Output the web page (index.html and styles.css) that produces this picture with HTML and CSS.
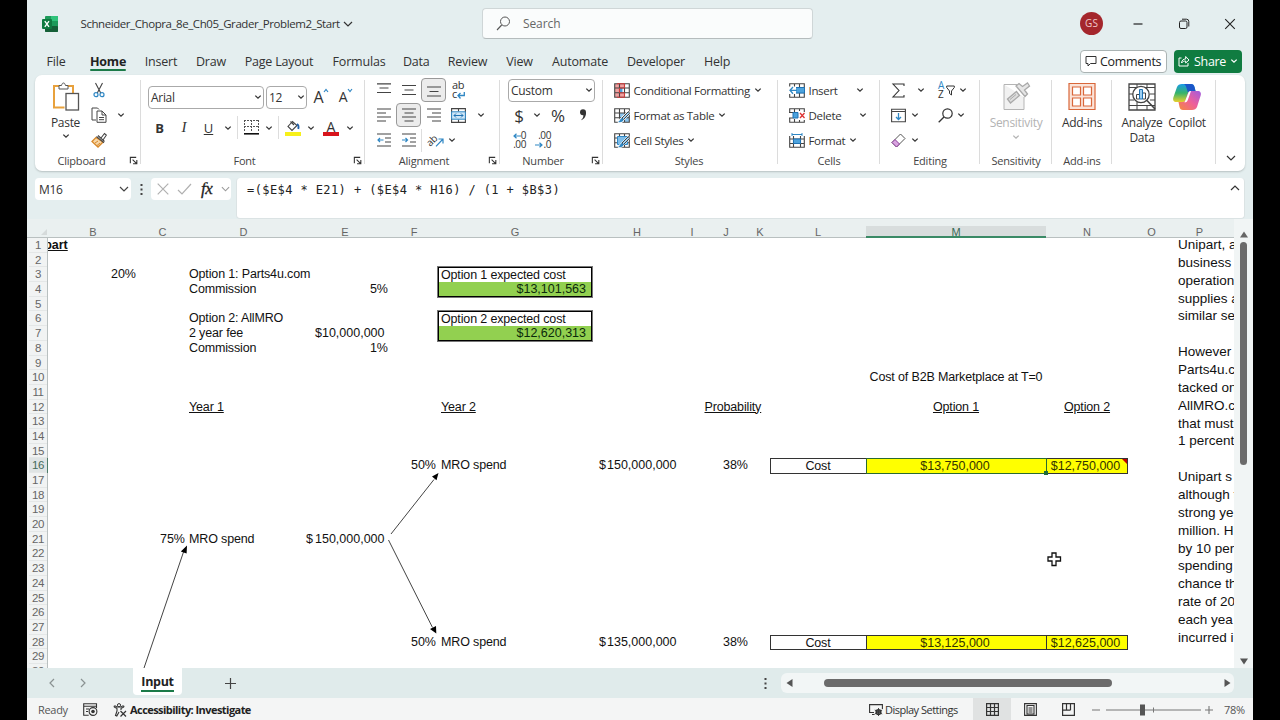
FILE: index.html
```html
<!DOCTYPE html>
<html lang="en">
<head>
    <meta charset="utf-8">
    <title>Schneider_Chopra_8e_Ch05_Grader_Problem2_Start - Excel</title>
    <link rel="stylesheet" href="styles.css">
</head>
<body>

<!-- shared icons -->
<svg class="defs" width="0" height="0">
    <symbol id="chev" viewBox="0 0 8 8"><path d="M1.3 2.6 4 5.2 6.7 2.6" fill="none" stroke="currentColor" stroke-width="1.3"/></symbol>
    <symbol id="launch" viewBox="0 0 10 10"><path d="M1.5 8V1.5H8M4 4l4.5 4.5M8.7 4.5v4.2H4.5" fill="none" stroke="#333" stroke-width="1.2"/></symbol>
    <symbol id="gridbox" viewBox="0 0 16 15"><path d="M.7.7h14.6v13.6H.7zM5.5.7v13.6M10.5.7v13.6M.7 5h14.6M.7 9.8h14.6" fill="none" stroke="#444" stroke-width="1.1"/></symbol>
</svg>

<div class="app">

    <!-- title bar -->
    <div class="title-bar">
        <svg class="logo" viewBox="0 0 16 16"><rect x="3" y="0" width="13" height="16" rx="1" fill="#1d9a5a"/><rect x="9" y="0" width="7" height="5" fill="#2fc27a"/><rect x="3" y="10" width="13" height="6" rx="1" fill="#155f37"/><rect x="0" y="3" width="10" height="10" rx="1" fill="#0f7a40"/><path d="M2.8 5.2l4.2 5.6M7 5.2l-4.2 5.6" stroke="#fff" stroke-width="1.4"/></svg>
        <span class="file-name">Schneider_Chopra_8e_Ch05_Grader_Problem2_Start</span>
        <svg class="name-chev" viewBox="0 0 10 8"><path d="M1 2l4 4 4-4" fill="none" stroke="#333" stroke-width="1.2"/></svg>
        <div class="search">
            <svg width="15" height="15" viewBox="0 0 15 15"><circle cx="9" cy="5.5" r="4.5" fill="none" stroke="#555"/><path d="M5.7 9 1 14" stroke="#555" stroke-width="1.1"/></svg>
            <span>Search</span>
        </div>
        <span class="avatar">GS</span>
        <svg class="win" viewBox="0 0 12 12"><path d="M1.5 6h9" stroke="#222" stroke-width="1.2"/></svg>
        <svg class="win" viewBox="0 0 12 12"><rect x="1.5" y="3" width="7.5" height="7.5" rx="1.5" fill="none" stroke="#222"/><path d="M4 1.2h4.500a2.300 2.300 0 0 1 2.300 2.300V8.500" fill="none" stroke="#222"/></svg>
        <svg class="win" viewBox="0 0 12 12"><path d="M1.200 1.200l9.600 9.600M10.800 1.200l-9.600 9.600" stroke="#222" stroke-width="1.100"/></svg>
    </div>

    <!-- ribbon tabs -->
    <div class="tabs">
        <span class="tab t-file">File</span>
        <span class="tab t-home active">Home</span>
        <span class="tab t-insert">Insert</span>
        <span class="tab t-draw">Draw</span>
        <span class="tab t-page">Page Layout</span>
        <span class="tab t-formulas">Formulas</span>
        <span class="tab t-data">Data</span>
        <span class="tab t-review">Review</span>
        <span class="tab t-view">View</span>
        <span class="tab t-auto">Automate</span>
        <span class="tab t-dev">Developer</span>
        <span class="tab t-help">Help</span>
        <button class="btn comments"><svg width="12" height="12" viewBox="0 0 12 12"><path d="M1 1.500h10v7H5.500L3 11V8.500H1z" fill="none" stroke="#333"/></svg>Comments</button>
        <button class="btn share"><svg width="12" height="12" viewBox="0 0 12 12"><path d="M3.500 3H1v8h9V8M3.500 8c.3-3 2-4 4.200-4V1.500L11 5 7.700 8V6C6 6 4.700 6.500 3.500 8z" fill="none" stroke="#fff"/></svg>Share<svg class="chev"><use href="#chev"/></svg></button>
    </div>

    <!-- ribbon -->
    <div class="ribbon">

        <div class="group g-clipboard">
            <div class="body">
                <div class="big">
                    <svg width="28" height="29" viewBox="0 0 28 29"><path d="M2 4.500h18V11h-7v14.500H2z" fill="#fff"/><path d="M12.500 25.600H2V4h5M15.500 4H21v7" fill="none" stroke="#e8a13c" stroke-width="2"/><path d="M7 7V3.500h2.500C10 1.800 10.500 1 11.500 1S13 1.800 13.500 3.500H16V7z" fill="#fff" stroke="#555"/><rect x="14" y="11.500" width="12.500" height="16.500" fill="#fff" stroke="#555" stroke-width="1.300"/></svg>
                    <span>Paste</span>
                    <svg class="chev"><use href="#chev"/></svg>
                </div>
                <div class="col">
                    <div class="row"><svg width="12" height="16" viewBox="0 0 12 16"><path d="M2.500 1l5.200 10M9.500 1 4.300 11" stroke="#444" stroke-width="1.100"/><circle cx="3" cy="12.700" r="2" fill="none" stroke="#2f87c4" stroke-width="1.200"/><circle cx="9" cy="12.700" r="2" fill="none" stroke="#2f87c4" stroke-width="1.200"/></svg></div>
                    <div class="row"><svg width="16" height="16" viewBox="0 0 16 16"><path d="M5 13H1V1h5.500l1.500 1.500M6 4h5l4 4v7.300H6zM11 4v4h4M8 10.500h5M8 12.700h5" fill="none" stroke="#444"/></svg><svg class="chev after"><use href="#chev"/></svg></div>
                    <div class="row"><svg width="16" height="16" viewBox="0 0 16 16"><path d="M5 5.500 1 9.500l6 5.500 5-5z" fill="#f7d7a8" stroke="#d8892b" stroke-width="1.300"/><path d="M4 11l3-2M6 13.500l3-2.500" stroke="#d8892b"/><path d="M5.500 4.500l7.500 6.300M7 3.500l6.500 6M10 6l3.500-4.500 1.800 1.700L12 8" fill="#fff" stroke="#444" stroke-width="1.100"/></svg></div>
                </div>
            </div>
            <div class="label">Clipboard</div><svg class="launch"><use href="#launch"/></svg>
        </div>

        <div class="group g-font">
            <div class="body">
                <div class="row top">
                    <div class="select font-name">Arial<svg class="chev"><use href="#chev"/></svg></div>
                    <div class="select font-size">12<svg class="chev"><use href="#chev"/></svg></div>
                    <span class="grow big-a">A<svg width="6" height="5" viewBox="0 0 6 5"><path d="M1 4l2-2.500L5 4" fill="none" stroke="#2f87c4" stroke-width="1.200"/></svg></span>
                    <span class="grow small-a">A<svg width="6" height="5" viewBox="0 0 6 5"><path d="M1 1l2 2.500L5 1" fill="none" stroke="#2f87c4" stroke-width="1.200"/></svg></span>
                </div>
                <div class="row bottom">
                    <b class="w25">B</b>
                    <i class="w24 serif">I</i>
                    <u class="w25">U</u>
                    <svg class="chev w14"><use href="#chev"/></svg>
                    <span class="sep"></span>
                    <span class="w22"><svg width="15" height="15" viewBox="0 0 15 15"><path d="M.5 0v12M7.500 0v12M14.500 0v12M0 .5h15M0 6.500h15" stroke="#555" stroke-dasharray="2 1"/><path d="M0 13.800h15" stroke="#111" stroke-width="1.600"/></svg></span>
                    <svg class="chev w14"><use href="#chev"/></svg>
                    <span class="sep"></span>
                    <span class="w24"><svg width="16" height="16" viewBox="0 0 16 16"><path d="M7.500 1.500 3 6.500l4 4 5-5zM5.500 1.500 9 5" fill="none" stroke="#444" stroke-width="1.100"/><path d="M12 4c1.700 1 1.800 3 1.300 5" fill="none" stroke="#1f5fa8" stroke-width="1.800"/><rect y="12" width="16" height="4" fill="#f7f01a"/></svg></span>
                    <svg class="chev w12"><use href="#chev"/></svg>
                    <span class="w28 font-color">A</span>
                    <svg class="chev w10"><use href="#chev"/></svg>
                </div>
            </div>
            <div class="label">Font</div><svg class="launch"><use href="#launch"/></svg>
        </div>

        <div class="group g-align">
            <div class="body">
                <div class="row">
                    <span class="w25"><svg width="14" height="14" viewBox="0 0 14 14"><path d="M0 .8h14M2.500 5h9M0 9.500h14" stroke="#444" stroke-width="1.200"/></svg></span>
                    <span class="w25"><svg width="14" height="14" viewBox="0 0 14 14"><path d="M0 2.500h14M2.500 7h9M0 11.500h14" stroke="#444" stroke-width="1.200"/></svg></span>
                    <span class="w25 pressed"><svg width="14" height="14" viewBox="0 0 14 14"><path d="M0 4h14M2.500 8.500h9M0 13h14" stroke="#444" stroke-width="1.200"/></svg></span>
                    <span class="w25 wrap-text">ab<br>c<svg width="8" height="8" viewBox="0 0 8 8"><path d="M7.300 0v3.500H1M3.500 1 1 3.500 3.500 6.500" fill="none" stroke="#2f87c4" stroke-width="1.300"/></svg></span>
                </div>
                <div class="row">
                    <span class="w25"><svg width="14" height="14" viewBox="0 0 14 14"><path d="M0 1h14M0 5h9M0 9h14M0 13h9" stroke="#444" stroke-width="1.200"/></svg></span>
                    <span class="w25 pressed"><svg width="14" height="14" viewBox="0 0 14 14"><path d="M0 1h14M2.500 5h9M0 9h14M2.500 13h9" stroke="#444" stroke-width="1.200"/></svg></span>
                    <span class="w25"><svg width="14" height="14" viewBox="0 0 14 14"><path d="M0 1h14M5 5h9M0 9h14M5 13h9" stroke="#444" stroke-width="1.200"/></svg></span>
                    <span class="w25"><svg width="15" height="15" viewBox="0 0 15 15"><path d="M.6.6h13.800v13.800H.6zM7.500.6v3M7.500 11.500v3" fill="none" stroke="#444" stroke-width="1.100"/><path d="M.6 3.800h13.800v7.400H.6z" fill="#cfe6f7" stroke="#2f87c4"/><path d="M3 7.500h9M5 5.500l-2 2 2 2M10 5.500l2 2-2 2" fill="none" stroke="#2073b4"/></svg></span>
                    <svg class="chev w20"><use href="#chev"/></svg>
                </div>
                <div class="row">
                    <span class="w25"><svg width="14" height="14" viewBox="0 0 14 14"><path d="M0 1h14M8 5h6M8 9h6M0 13h14" stroke="#444" stroke-width="1.200"/><path d="M6.500 7H1M3 5 1 7l2 2" fill="none" stroke="#2f87c4" stroke-width="1.200"/></svg></span>
                    <span class="w25"><svg width="14" height="14" viewBox="0 0 14 14"><path d="M0 1h14M8 5h6M8 9h6M0 13h14" stroke="#444" stroke-width="1.200"/><path d="M0 7h5.500M3.500 5l2 2-2 2" fill="none" stroke="#2f87c4" stroke-width="1.200"/></svg></span>
                    <span class="sep tightsep"></span>
                    <span class="w24 orient"><em>ab</em><svg width="9" height="9" viewBox="0 0 9 9"><path d="M1 8.300 8 1M3.500 1H8v4.500" fill="none" stroke="#2f87c4" stroke-width="1.200"/></svg></span>
                    <svg class="chev w10"><use href="#chev"/></svg>
                </div>
            </div>
            <div class="label">Alignment</div><svg class="launch"><use href="#launch"/></svg>
        </div>

        <div class="group g-number">
            <div class="body">
                <div class="row"><div class="select number-format">Custom<svg class="chev"><use href="#chev"/></svg></div></div>
                <div class="row sym">
                    <span class="w22">$</span><svg class="chev w14"><use href="#chev"/></svg><span class="w28">%</span><span class="w22 comma"><svg width="8" height="12" viewBox="0 0 8 12"><circle cx="4" cy="3.300" r="3" fill="#333"/><path d="M7 3C7.300 7 5.500 10 2 11.300c1.500-1.500 2.500-3 2.300-5z" fill="#333"/></svg></span>
                </div>
                <div class="row">
                    <span class="dec"><svg width="8" height="6" viewBox="0 0 8 6"><path d="M8 3H1M3.500.7 1 3l2.500 2.300" fill="none" stroke="#2f87c4" stroke-width="1.200"/></svg>0<br>.00</span>
                    <span class="dec">.00<br><svg width="8" height="6" viewBox="0 0 8 6"><path d="M0 3h7M4.500.7 7 3 4.500 5.300" fill="none" stroke="#2f87c4" stroke-width="1.200"/></svg>.0</span>
                </div>
            </div>
            <div class="label">Number</div><svg class="launch"><use href="#launch"/></svg>
        </div>

        <div class="group g-styles">
            <div class="body">
                <div class="row cmd"><svg width="16" height="15" viewBox="0 0 16 15"><path d="M1 1h9.500v4H5.500v4.500h5V14H1z" fill="#f3a0a0"/><path d="M5.500 5h3v5h-3z" fill="#4da3dd"/><use href="#gridbox"/><path d="M3 .7h7.500V5H5.500v4.800h5v4.500H3" fill="none" stroke="#cf3b3b"/></svg><span>Conditional Formatting</span><svg class="chev"><use href="#chev"/></svg></div>
                <div class="row cmd"><svg width="16" height="15" viewBox="0 0 16 15"><path d="M5.500 5H15v9H5.500z" fill="#8cc5ee"/><use href="#gridbox"/><path d="M14.500 3.500 7.500 10.500c-2 .5-1.500 3-3.500 3.500 3 .7 5-.5 5.200-2.200l6.300-6.500z" fill="#fff" stroke="#fff" stroke-width="2"/><path d="M14.500 3.500 8 10l1.500 1.500 6-6z" fill="#9fd0f2" stroke="#444"/><path d="M8 10c-2 0-1.500 3-4 4 3 .7 5.500-.5 5.500-2.500z" fill="#2f87c4"/></svg><span>Format as Table</span><svg class="chev"><use href="#chev"/></svg></div>
                <div class="row cmd"><svg width="16" height="15" viewBox="0 0 16 15"><use href="#gridbox"/><path d="M3.500 3.500h10v8h-10z" fill="#7dbdea" stroke="#2f87c4"/><path d="M14.500 3.500 7.500 10.500c-2 .5-1.500 3-3.500 3.500 3 .7 5-.5 5.200-2.200l6.300-6.500z" fill="#fff" stroke="#fff" stroke-width="1.500"/><path d="M14.500 3.500 8 10l1.500 1.500 6-6z" fill="#9fd0f2" stroke="#444"/><path d="M8 10c-2 0-1.500 3-4 4 3 .7 5.500-.5 5.500-2.500z" fill="#2f87c4"/></svg><span>Cell Styles</span><svg class="chev"><use href="#chev"/></svg></div>
            </div>
            <div class="label">Styles</div>
        </div>

        <div class="group g-cells">
            <div class="body">
                <div class="row cmd"><svg width="16" height="15" viewBox="0 0 16 15"><use href="#gridbox"/><path d="M6 4.500h9.500v5.500H6z" fill="#4da3dd" stroke="#2073b4"/><path d="M0 3.500h7v7.500H0z" fill="#fff"/><path d="M8 7.300H1M4 4 1 7.300l3 3.400" fill="none" stroke="#2f87c4" stroke-width="1.300"/></svg><span class="c-name ins">Insert</span><svg class="chev"><use href="#chev"/></svg></div>
                <div class="row cmd"><svg width="16" height="15" viewBox="0 0 16 15"><path d="M.7 5V.7h14.600V4M.7 10v4.300h14.600V12M5.500.7V4M10.500.7V3M5.500 11v3M10.500 12v2" fill="none" stroke="#444" stroke-width="1.100"/><path d="M0 4.500h4.500M0 10h4.500" stroke="#444"/><path d="M4 4.500h5v5.500H4z" fill="#4da3dd" stroke="#2073b4"/><path d="M11 5l4.500 5M15.500 5 11 10" stroke="#d33" stroke-width="1.300"/></svg><span class="c-name del">Delete</span><svg class="chev"><use href="#chev"/></svg></div>
                <div class="row cmd"><svg width="16" height="15" viewBox="0 0 16 15"><path d="M.7 3v11.300h14.600V3M4.500 3v11M11.500 3v11M.7 6h14.600M.7 10.500h14.600" fill="none" stroke="#444" stroke-width="1.100"/><path d="M4.500 6h7v4.500h-7z" fill="#4da3dd" stroke="#2073b4"/><path d="M3 1.500h10M3 0v3M13 0v3" stroke="#2f87c4"/></svg><span>Format</span><svg class="chev"><use href="#chev"/></svg></div>
            </div>
            <div class="label">Cells</div>
        </div>

        <div class="group g-editing">
            <div class="body">
                <div class="col e-left">
                    <div class="row"><svg width="15" height="15" viewBox="0 0 15 15"><path d="M13 3V1H2l6 6.500L2 14h11v-2" fill="none" stroke="#333" stroke-width="1.100"/></svg><svg class="chev far"><use href="#chev"/></svg></div>
                    <div class="row"><svg width="15" height="15" viewBox="0 0 15 15"><path d="M.6 1.200h13.800v12.600H.6zM.6 3.500h13.800" fill="none" stroke="#444" stroke-width="1.100"/><path d="M7.500 5v6.500M5 9l2.500 2.500L10 9" fill="none" stroke="#2f87c4" stroke-width="1.300"/></svg><svg class="chev"><use href="#chev"/></svg></div>
                    <div class="row"><svg width="15" height="15" viewBox="0 0 15 15"><path d="M1 9.500 9.500 1 14 5.500 5.500 14z" fill="#fff" stroke="#555"/><path d="M1 9.500 4 6.500 8.500 11l-3 3z" fill="#d9a3e0" stroke="#8a3f9a"/></svg><svg class="chev"><use href="#chev"/></svg></div>
                </div>
                <div class="col e-right">
                    <div class="row"><span class="az"><em>A</em><br>Z</span><svg width="9" height="11" viewBox="0 0 9 11"><path d="M.7 1h7.600v1.500L5.500 6v4L3.500 8.500V6L.7 2.500z" fill="none" stroke="#333"/></svg><svg class="chev"><use href="#chev"/></svg></div>
                    <div class="row"><svg width="15" height="15" viewBox="0 0 15 15"><circle cx="9.500" cy="5.500" r="4.700" fill="none" stroke="#333" stroke-width="1.200"/><path d="M6 9 .7 14.300" stroke="#333" stroke-width="1.300"/></svg><svg class="chev"><use href="#chev"/></svg></div>
                </div>
            </div>
            <div class="label">Editing</div>
        </div>

        <div class="group g-sens">
            <div class="body">
                <div class="big off">
                    <svg width="28" height="29" viewBox="0 0 28 29"><path d="M2 2.500h13M22 15v12.500H2v-25" fill="#f1f1f1" stroke="#b5b5b5"/><path d="M5.500 17l9-7.500 3 4L8.500 21z" fill="#ddd" stroke="#a9a9a9" stroke-width="1.300"/><path d="M8 17.500l6-5" stroke="#a9a9a9"/><path d="M14 4l9 10.500 2.500-2.500-3-4 5-4L25.500 1l-5 3.500L17 1.500z" fill="#e6e6e6" stroke="#a9a9a9" stroke-width="1.300"/></svg>
                    <span>Sensitivity</span>
                    <svg class="chev"><use href="#chev"/></svg>
                </div>
            </div>
            <div class="label">Sensitivity</div>
        </div>

        <div class="group g-addins">
            <div class="body">
                <div class="big">
                    <svg width="28" height="29" viewBox="0 0 28 29"><path d="M1 1.500h26v26H1z" fill="#fbe3d8" stroke="#d9673a" stroke-width="1.200"/><path d="M4.500 5h8v8h-8zM15.500 5h8v8h-8zM4.500 16h8v8h-8zM15.500 16h8v8h-8z" fill="#fff" stroke="#d9673a" stroke-width="1.200"/></svg>
                    <span>Add-ins</span>
                </div>
            </div>
            <div class="label">Add-ins</div>
        </div>

        <div class="group g-analyze">
            <div class="body">
                <div class="big">
                    <svg width="28" height="29" viewBox="0 0 28 29"><path d="M1 2h26v26H1z" fill="#fff" stroke="#444" stroke-width="1.300"/><path d="M1 5.500h26M1 12h4M1 18h5M1 23.500h26M9 2v4M19 2v4M9 20v8M19 23v5M22 12h5M22 18h5" stroke="#444"/><circle cx="13" cy="12.500" r="8.200" fill="#fff" stroke="#444" stroke-width="1.300"/><path d="M8.500 17v-4.500h3V17zM14.500 17v-6h3v6z" fill="#fff" stroke="#444"/><path d="M11.500 17V7.500h3V17z" fill="#9fd0f2" stroke="#2073b4"/><path d="M19 18.500l8 8.500" stroke="#444" stroke-width="1.600"/></svg>
                    <span>Analyze<br>Data</span>
                </div>
                <div class="big copilot">
                    <svg width="30" height="29" viewBox="0 0 30 29">
                        <defs>
                            <linearGradient id="ca" x1="0" y1="0" x2="0" y2="1"><stop offset="0" stop-color="#1a9be8"/><stop offset=".5" stop-color="#35b36b"/><stop offset="1" stop-color="#e8d02c"/></linearGradient>
                            <linearGradient id="cb" x1="1" y1="0" x2="0" y2="1"><stop offset="0" stop-color="#a05be0"/><stop offset=".5" stop-color="#ee5f9a"/><stop offset="1" stop-color="#f58a3c"/></linearGradient>
                        </defs>
                        <path d="M10 2h9c2 0 3 1 3.500 3l1 4h-4c-2 0-3 1-3.500 3l-1.500 5c-.7 2-1.500 3-3.500 3H4.500C1.500 20 .5 18 1.500 15L5 5c.8-2 2.500-3 5-3z" fill="url(#ca)"/>
                        <path d="M12 2h7c2 0 3 1 3.500 3l1 4h-4c-1.500 0-2.500.6-3.200 2C14.500 8 15 4 12 2z" fill="#1b56c9"/>
                        <path d="M20 28h-9c-2 0-3-1-3.500-3l-1-5h4c2 0 3-1 3.500-3l1.500-5c.7-2 1.500-3 3.500-3h6.500c3 0 4 2 3 5L25 25c-.8 2-2.500 3-5 3z" fill="url(#cb)"/>
                        <path d="M12.500 20.500l4-10c.4-1 1-1.500 2.500-1.500l-3 8.500c-.7 2-1.500 3-3.500 3z" fill="#fff"/>
                    </svg>
                    <span>Copilot</span>
                </div>
            </div>
        </div>

        <svg class="collapse" viewBox="0 0 10 8"><path d="M1 2l4 4 4-4" fill="none" stroke="#333" stroke-width="1.200"/></svg>
    </div>

    <!-- formula bar -->
    <div class="formula-bar">
        <div class="name-box">M16<svg width="10" height="8" viewBox="0 0 10 8"><path d="M1 2l4 4 4-4" fill="none" stroke="#444" stroke-width="1.200"/></svg></div>
        <svg class="dots" width="3" height="11" viewBox="0 0 3 11"><path d="M.5 0h2v2h-2zM.5 4.500h2v2h-2zM.5 9h2v2h-2z" fill="#444"/></svg>
        <div class="fx-box">
            <svg width="12" height="12" viewBox="0 0 12 12"><path d="M.7.700l10.600 10.600M11.300.700.7 11.300" stroke="#b0b0b0" stroke-width="1.200"/></svg>
            <svg width="15" height="12" viewBox="0 0 15 12"><path d="M1 7l4 4L14 1" fill="none" stroke="#b0b0b0" stroke-width="1.200"/></svg>
            <span class="fx">fx</span>
            <svg width="9" height="8" viewBox="0 0 10 8"><path d="M1 2l4 4 4-4" fill="none" stroke="#999" stroke-width="1.200"/></svg>
        </div>
        <div class="formula"><span>=($E$4 * E21) + ($E$4 * H16) / (1 + $B$3)</span><svg width="10" height="8" viewBox="0 0 10 8"><path d="M1 6l4-4 4 4" fill="none" stroke="#333" stroke-width="1.200"/></svg></div>
    </div>

    <!-- worksheet -->
    <div class="work">
        <div class="pane">
            <div class="cols heads">
                <span class="corner"></span>
                <span>B</span><span>C</span><span>D</span><span>E</span><span>F</span><span>G</span><span>H</span><span>I</span><span>J</span><span>K</span><span>L</span><span class="sel">M</span><span>N</span><span>O</span><span>P</span>
            </div>
            <div class="cols cells">
                <div class="row-nums">
                    <span>1</span><span>2</span><span>3</span><span>4</span><span>5</span><span>6</span><span>7</span><span>8</span><span>9</span><span>10</span>
                    <span>11</span><span>12</span><span>13</span><span>14</span><span>15</span><span class="sel">16</span><span>17</span><span>18</span><span>19</span><span>20</span>
                    <span>21</span><span>22</span><span>23</span><span>24</span><span>25</span><span>26</span><span>27</span><span>28</span><span>29</span><span>30</span>
                </div>

                <div class="cell r1 cB title"><span>Unipart</span></div>
                <div class="cell r3 cB num">20%</div>
                <div class="cell r3 cD">Option 1: Parts4u.com</div>
                <div class="cell r4 cD">Commission</div>
                <div class="cell r4 cE num">5%</div>
                <div class="cell r6 cD">Option 2: AllMRO</div>
                <div class="cell r7 cD">2 year fee</div>
                <div class="cell r7 cE money">$10,000,000</div>
                <div class="cell r8 cD">Commission</div>
                <div class="cell r8 cE num">1%</div>

                <div class="result r3 cG"><p>Option 1 expected cost</p><p class="total">$13,101,563</p></div>
                <div class="result r6 cG"><p>Option 2 expected cost</p><p class="total">$12,620,313</p></div>

                <div class="cell r10 cM mid">Cost of B2B Marketplace at T=0</div>
                <div class="cell r12 cD"><u>Year 1</u></div>
                <div class="cell r12 cG left3"><u>Year 2</u></div>
                <div class="cell r12 cIJK"><u>Probability</u></div>
                <div class="cell r12 cM mid"><u>Option 1</u></div>
                <div class="cell r12 cN mid"><u>Option 2</u></div>

                <div class="cell r16 cF num">50%</div>
                <div class="cell r16 cG left3">MRO spend</div>
                <div class="cell r16 cH money"><i>$</i>150,000,000</div>
                <div class="cell r16 cJ num">38%</div>
                <div class="cell r16 cL mid boxed">Cost</div>
                <div class="cell r16 cM mid boxed yellow active-cell">$13,750,000</div>
                <div class="cell r16 cN mid boxed yellow note">$12,750,000</div>

                <div class="cell r21 cC num">75%</div>
                <div class="cell r21 cD">MRO spend</div>
                <div class="cell r21 cE money"><i class="wide">$</i>150,000,000</div>

                <div class="cell r28 cF num">50%</div>
                <div class="cell r28 cG left3">MRO spend</div>
                <div class="cell r28 cH money"><i>$</i>135,000,000</div>
                <div class="cell r28 cJ num">38%</div>
                <div class="cell r28 cL mid boxed">Cost</div>
                <div class="cell r28 cM mid boxed yellow">$13,125,000</div>
                <div class="cell r28 cN mid boxed yellow">$12,625,000</div>

                <!-- shapes drawn on the sheet -->
                <svg class="arrows" width="450" height="430" viewBox="27 238 450 430">
                    <g stroke="#444" stroke-width="1"><path d="M144 668 183.500 552M391 534l43-54.500M388.500 540l44 87.500"/></g>
                    <path d="M187 545.500l-6.200 6 5.800 2zM438.500 473l-6.500 3.500 4.500 3.800zM436.300 633.500l-.3-7.500-6 3z" fill="#000"/>
                </svg>
                <div class="text-box">Unipart, a<br>business<br>operation<br>supplies a<br>similar se<br><br>However<br>Parts4u.c<br>tacked on<br>AllMRO.c<br>that must<br>1 percent<br><br>Unipart s<br>although t<br>strong ye<br>million. H<br>by 10 per<br>spending<br>chance th<br>rate of 20<br>each yea<br>incurred i<br><br>Find the t</div>
                <svg class="cursor" width="15" height="15" viewBox="0 0 15 15"><path d="M5 1h4v4h4.500v4H9v4.500H5V9H1V5h4z" fill="#fff" stroke="#111" stroke-width="1.300"/></svg>
            </div>
        </div>
        <div class="v-scroll">
            <svg width="8" height="7" viewBox="0 0 8 7"><path d="M4 .5 8 6.500H0z" fill="#666"/></svg>
            <span class="v-thumb"></span>
            <svg width="8" height="7" viewBox="0 0 8 7"><path d="M4 6.500 8 .5H0z" fill="#555"/></svg>
        </div>
    </div>

    <!-- sheet tabs -->
    <div class="sheet-bar">
        <svg class="nav" viewBox="0 0 6 10"><path d="M5 1 1 5l4 4" fill="none" stroke="#8a9292" stroke-width="1.200"/></svg>
        <svg class="nav" viewBox="0 0 6 10"><path d="M1 1l4 4-4 4" fill="none" stroke="#8a9292" stroke-width="1.200"/></svg>
        <div class="sheet-tab"><span>Input</span></div>
        <svg class="plus" viewBox="0 0 11 11"><path d="M5.500 0v11M0 5.500h11" stroke="#444" stroke-width="1.200"/></svg>
        <svg class="more" width="3" height="11" viewBox="0 0 3 11"><path d="M.5 0h2v2h-2zM.5 4.500h2v2h-2zM.5 9h2v2h-2z" fill="#444"/></svg>
        <div class="h-scroll">
            <svg width="7" height="8" viewBox="0 0 7 8"><path d="M.5 4 6.500 0v8z" fill="#555"/></svg>
            <span class="h-thumb"></span>
            <svg width="7" height="8" viewBox="0 0 7 8"><path d="M6.500 4 .5 0v8z" fill="#555"/></svg>
        </div>
    </div>

    <!-- status bar -->
    <div class="status">
        <span class="ready">Ready</span>
        <svg class="macro" width="15" height="13" viewBox="0 0 15 13"><path d="M13.500 5V.7H.7v11.600h5M.7 3.300h12.800M3 6h3M3 8.500h2" fill="none" stroke="#333" stroke-width="1.100"/><circle cx="10" cy="8.500" r="3.900" fill="none" stroke="#333" stroke-width="1.100"/><circle cx="10" cy="8.500" r="1.800" fill="#333"/></svg>
        <svg class="acc" width="14" height="14" viewBox="0 0 14 14"><circle cx="6" cy="2.200" r="1.600" fill="none" stroke="#333"/><path d="M.8 3.500C2 5 4 5 4 5.500V8l-1.500 4.500 1.300.5L6 9M11.200 3.500C10 5 8 5 8 5.500V7M.8 3.500 2 2.800 4 4h4l2-1.200 1.200.7" fill="none" stroke="#333" stroke-width="1.100"/><path d="M7.500 8l5.500 5.500M13 8l-5.500 5.500" stroke="#333" stroke-width="1.200"/></svg>
        <b>Accessibility: Investigate</b>
        <svg class="disp" width="14" height="13" viewBox="0 0 14 13"><path d="M5 9.500H.6V1.600h12.800V6M3 11.500h2.500" fill="none" stroke="#333" stroke-width="1.100"/><circle cx="9.500" cy="9" r="2.300" fill="none" stroke="#333" stroke-width="1.600"/><path d="M9.500 5v8M5.800 7l7.400 4M13.200 7l-7.400 4" stroke="#333" stroke-width=".9"/></svg>
        <span class="display">Display Settings</span>
        <span class="view on"><svg width="13" height="13" viewBox="0 0 13 13"><path d="M.6.6h11.800v11.800H.6zM4.500.6v12M8.500.6v12M.6 4.500h12M.6 8.500h12" fill="none" stroke="#333" stroke-width="1.200"/></svg></span>
        <span class="view"><svg width="13" height="13" viewBox="0 0 13 13"><path d="M.6.6h11.800v11.800H.6zM3 2.500h7v8.500H3zM4.500 5h4M4.500 7h4M4.500 9h4" fill="none" stroke="#333" stroke-width="1.100"/></svg></span>
        <span class="view"><svg width="13" height="13" viewBox="0 0 13 13"><path d="M.6.6h11.800v11.800H.6zM4.500.6v6.500M8.500.6v6.500M.6 7.100h8" fill="none" stroke="#333" stroke-width="1.200"/></svg></span>
        <svg class="zoom" width="121" height="12" viewBox="0 0 121 12"><path d="M0 6h8M113 6h8M117 2v8" stroke="#777" stroke-width="1.100"/><path d="M14 6h95M61.500 3.500v5" stroke="#777"/><rect x="48" y=".5" width="5" height="11" fill="#555"/></svg>
        <span class="pct">78%</span>
    </div>

</div>
</body>
</html>
```

FILE: styles.css
```css
*{box-sizing:border-box;  margin:0;  }
body{background:#000;  font-family:'Open Sans','Noto Sans',sans-serif;  color:#333;  }
svg{display:block;  flex:none;  overflow:visible;  }
.defs{position:absolute;  }

.app{width:1226px;  height:720px;  margin-left:27px;  display:flex;  flex-direction:column;  background:#e4eeef;  overflow:hidden;  }
.chev{width:8px;  height:8px;  color:#333;  }

/* title bar */
.title-bar{height:47px;  flex:none;  display:flex;  align-items:center;  }
.title-bar>*{flex:none;  }
.logo{width:16px;  height:16px;  margin-left:15px;  }
.file-name{width:258px;  margin-left:22.5px;  font-size:11.500px;  letter-spacing:-0.43px;  white-space:nowrap;  }
.name-chev{width:10px;  height:8px;  margin-left:4px;  }
.search{width:331px;  height:31px;  margin-left:129.500px;  padding-left:13px;  display:flex;  align-items:center;  gap:12px;  background:#fafcfc;  border:1px solid #cfd6d7;  border-bottom-color:#b5bcbd;  border-radius:4px;  font-size:12px;  letter-spacing:-0.1px;  color:#666;  }
.avatar{width:23px;  height:23px;  margin:0 28.500px 0 267px;  border-radius:50%;  background:#a4262c;  color:#f0c9cb;  font-size:10px;  line-height:23px;  text-align:center;  }
.win{width:12px;  height:12px;  margin-right:34px;  }

/* ribbon tabs */
.tabs{height:28px;  flex:none;  display:flex;  align-items:center;  font-size:12.500px;  padding-left:12px;  }
.tabs>*{flex:none;  }
.tab{height:28px;  line-height:29px;  text-align:center;  white-space:nowrap;  letter-spacing:-0.2px;  }
.t-file{width:34px;  }
.t-home{width:70px;  }
.t-insert{width:36px;  }
.t-draw{width:64px;  }
.t-page{width:72px;  }
.t-formulas{width:88px;  }
.t-data{width:26px;  }
.t-review{width:77px;  }
.t-view{width:27px;  }
.t-auto{width:94px;  }
.t-dev{width:58px;  }
.t-help{width:64px;  }
.active{font-weight:bold;  color:#222;  }
.active:after{content:'';  display:block;  width:36px;  height:2px;  margin:-7px auto 0;  background:#1b7a48;  border-radius:1px;  }
.btn{height:23px;  display:flex;  align-items:center;  gap:3px;  padding:0 0 0 4px;  font:12.500px 'Open Sans',sans-serif;  letter-spacing:-0.3px;  border-radius:4px;  white-space:nowrap;  }
.comments{width:87px;  margin-left:331px;  background:#fff;  border:1px solid #aab3b3;  color:#222;  }
.share{width:68px;  margin-left:7px;  background:#107c41;  border:none;  color:#fff;  gap:4px;  }
.share .chev{color:#fff;  }

/* ribbon */
.ribbon{width:1210px;  height:96px;  flex:none;  margin-left:8px;  display:flex;  background:#fff;  border-radius:7px;  box-shadow:0 1px 2px #b6c0c1;  }
.group{height:95px;  flex:none;  position:relative;  background:linear-gradient(#dcdcdc,#dcdcdc) right 5px / 1px 84px no-repeat;  }
.body{height:78px;  padding-top:2.500px;  }
.label{height:16px;  font-size:11px;  line-height:16px;  letter-spacing:-0.2px;  text-align:center;  color:#444;  }
.launch{position:absolute;  right:3px;  bottom:5px;  width:9px;  height:9px;  }
.row{height:25px;  display:flex;  align-items:center;  }
.row>*{flex:none;  }
.big{display:flex;  flex-direction:column;  align-items:center;  padding-top:4px;  font-size:12px;  line-height:15px;  letter-spacing:-0.3px;  text-align:center;  }
.big span{margin-top:4px;  }
.big .chev{margin-top:3px;  }
.off, .off .chev{color:#b3b3b3;  }
.sep{width:1px;  height:23px;  margin:0 2px;  background:#ddd;  }
.tightsep{margin:0 1px 0 0;  }
.w10{width:10px;  }
.w12{width:12px;  }
.w14{width:14px;  }
.w20{width:20px;  }
.w22{width:22px;  }
.w24{width:24px;  }
.w25{width:25px;  }
.w28{width:28px;  }
span.w22, span.w24, span.w25, span.w28{display:flex;  justify-content:center;  }
.select{display:flex;  align-items:center;  justify-content:space-between;  height:23px;  padding:0 1px 0 2px;  border:1px solid #aaa;  border-radius:4px;  font-size:12px;  letter-spacing:-0.3px;  }

.g-clipboard{width:106px;  }
.g-clipboard .body{display:flex;  padding-left:5px;  }
.g-clipboard .big{width:51px;  }
.g-clipboard .big .chev{margin-top:2px;  }
.g-clipboard .col{width:16px;  }
.g-clipboard .col .row{justify-content:center;  position:relative;  }
.after{position:absolute;  left:26px;  }
.g-clipboard .label{padding-right:13px;  }

.g-font{width:224px;  }
.g-font .top{height:39px;  padding-left:7px;  }
.g-font .bottom{height:22px;  padding-left:6px;  font-size:13px;  text-align:center;  }
.font-name{width:116px;  margin-right:2px;  }
.font-size{width:41px;  }
.grow{display:flex;  width:26px;  justify-content:flex-end;  line-height:18px;  letter-spacing:-0.5px;  }
.big-a{width:22px;  font-size:16px;  }
.small-a{width:24px;  font-size:14px;  }
.g-font .body .serif{font-family:'Liberation Serif',serif;  font-size:15px;  }
.font-color{height:16px;  line-height:13px;  font-size:14px;  background:linear-gradient(#d8141c,#d8141c) center bottom / 16px 4px no-repeat;  }
.g-font .label{padding-right:17px;  }

.g-align{width:135px;  }
.g-align .row{padding-left:6px;  }
.pressed{height:24px;  align-items:center;  background:#ececec;  border:1px solid #999;  border-radius:4px;  }
.wrap-text{font-size:11px;  line-height:9px;  letter-spacing:-0.3px;  }
span.wrap-text{display:block;  padding-left:6px;  height:20px;  }
.wrap-text svg{display:inline-block;  vertical-align:-2px;  }
.orient em{font-size:10px;  font-style:normal;  transform:rotate(-45deg);  line-height:12px;  }
.orient svg{margin:4px 0 0 -2px;  }
.g-align .label{padding-right:17px;  }

.g-number{width:103px;  }
.number-format{width:87px;  margin-left:8px;  }
.sym{padding-left:8px;  font-size:17px;  }
.sym span{align-items:center;  }
.dec{width:25px;  height:18px;  font-size:10px;  line-height:9px;  text-align:right;  padding-right:3px;  letter-spacing:-0.4px;  }
.g-number .dec{margin-left:4px;  }
.g-number .dec+.dec{margin-left:0;  }
.dec svg{display:inline-block;  }
.g-number .label{padding-right:17px;  }

.cmd{font-size:11.500px;  letter-spacing:-0.32px;  white-space:nowrap;  }
.cmd span{margin:0 4px 0 3.500px;  }
.g-styles{width:175px;  }
.g-styles .row{padding-left:11px;  }
.g-cells{width:102px;  }
.g-cells .row{padding-left:11px;  }
.cmd .ins{width:43px;  }
.cmd .del{width:46px;  }
.g-styles .label{padding-right:3px;  }

.g-editing{width:100px;  }
.g-editing .body{display:flex;  }
.e-left{width:58px;  padding-left:11px;  }
.e-left .chev{margin-left:5px;  }
.e-left .far{margin-left:11px;  }
.e-right .chev{margin-left:4px;  }
.az{width:8px;  font-size:10px;  line-height:9px;  }
.az em{font-style:normal;  color:#2f87c4;  }

.g-sens{width:72px;  }
.g-addins{width:60px;  }
.g-analyze{width:104px;  }
.g-analyze .body{display:flex;  padding-left:7px;  }
.g-analyze .big{width:46px;  }
.g-analyze .copilot{width:44px;  }
.collapse{width:10px;  height:8px;  margin:79px 0 0 10px;  }

/* formula bar */
.formula-bar{height:41px;  flex:none;  margin:7px 8px 0;  display:flex;  }
.name-box{width:96px;  height:22px;  padding:0 2px 0 4px;  display:flex;  align-items:center;  justify-content:space-between;  background:#fff;  border-radius:4px;  font-size:12px;  letter-spacing:-0.3px;  }
.dots{margin:6px 8px 0 9px;  }
.fx-box{width:80px;  height:22px;  padding:0 1px 0 6px;  display:flex;  align-items:center;  justify-content:space-between;  background:#fff;  border-radius:4px;  }
.fx{font:italic 17px 'Liberation Serif',serif;  letter-spacing:-0.3px;  color:#222;  -webkit-text-stroke:0.3px #222;  }
.formula{flex:1;  margin-left:5px;  padding:4px 4px 0 10px;  display:flex;  justify-content:space-between;  background:#fff;  border:1px solid #dbe3e4;  border-top:none;  border-radius:4px;  }
.formula span{font:12px/16px 'DejaVu Sans Mono',monospace;  letter-spacing:0.41px;  white-space:pre;  color:#222;  }
.formula svg{margin-top:2px;  }

/* worksheet */
.work{height:449px;  flex:none;  display:flex;  }
.pane{width:1207px;  overflow:hidden;  }
.cols{display:grid;  grid-template-columns:21px 90px 49px 113px 90px 48px 154px 90px 20px 48px 20px 96px 180px 82px 47px 59px;  }
.heads{height:19px;  padding-top:7px;  background:#eaf0f0;  border-bottom:1px solid #b9c0c0;  font:11px/12px 'Liberation Sans',sans-serif;  color:#666;  text-align:center;  }
.heads .sel{background:#d8dddd;  border-bottom:2px solid #3a8a66;  height:12px;  color:#3a6a55;  }
.heads span:last-child{padding-right:10px;  }
.corner{width:0;  height:0;  margin:3px 0 0 14px;  border-left:6px solid transparent;  border-bottom:6px solid #d5dada;  }
.cells{position:relative;  height:430px;  grid-template-rows:repeat(30,14.7px);  background:#fff;  overflow:hidden;  font:12.5px/14.7px 'Liberation Sans',sans-serif;  letter-spacing:-0.15px;  color:#111;  }
.row-nums{grid-area:1/1/31/2;  background:#f1f3f3;  border-right:1px solid #b9c0c0;  padding-left:2px;  font-size:11.500px;  letter-spacing:-0.4px;  text-align:center;  color:#666;  }
.row-nums span{display:block;  height:14.7px;  line-height:15px;  border-bottom:1px solid #e4e7e7;  }
.row-nums .sel{background:#dfe4e4;  box-shadow:1px 0 #4d7d69;  color:#446a5a;  }
.cell{white-space:nowrap;  padding:0 2px;  line-height:15px;  }
.title{overflow:hidden;  font-weight:bold;  text-decoration:underline;  padding:0;  letter-spacing:0;  }
.title span{display:block;  margin-left:-24px;  }
.num{text-align:right;  letter-spacing:0;  }
.money{text-align:right;  padding-right:5.500px;  letter-spacing:0;  }
.money i{font-style:normal;  margin-right:1px;  }
.money .wide{margin-right:2px;  }
.mid{text-align:center;  }
.left3{padding-left:3px;  }
.boxed{margin:0 -1px 0 0;  border:1px solid #333;  line-height:14.500px;  height:15.500px;  padding-right:3px;  }
.cN.boxed{margin-right:0;  padding-right:5px;  }
.yellow{background:#ff0;  color:#333300;  letter-spacing:0;  }
.active-cell{position:relative;  padding-right:5px;  border-color:#2a6b2f;  z-index:1;  }
.active-cell:after{content:'';  position:absolute;  right:-2px;  bottom:-2px;  width:4px;  height:4px;  background:#1f6b3a;  }
.note{position:relative;  }
.note:after{content:'';  position:absolute;  right:0;  top:0;  border-top:5px solid #c00000;  border-left:5px solid transparent;  }
.r28.cM{padding-right:5px;  }
.result{height:29.4px;  border:1px solid #000;  box-shadow:0 0 0 1px #777;  line-height:14px;  }
.result p{padding:0 5px 0 2px;  height:13.700px;  }
.result .total{background:#92d050;  text-align:right;  letter-spacing:0;  color:#0b2a0b;  }

.r1{grid-row:1;  }
.r3{grid-row:3;  }
.r4{grid-row:4;  }
.r6{grid-row:6;  }
.r7{grid-row:7;  }
.r8{grid-row:8;  }
.r10{grid-row:10;  }
.r12{grid-row:12;  }
.r16{grid-row:16;  }
.r21{grid-row:21;  }
.r28{grid-row:28;  }
.cB{grid-column:2;  }
.cC{grid-column:3;  }
.cD{grid-column:4;  }
.cE{grid-column:5;  }
.cF{grid-column:6;  }
.cG{grid-column:7;  }
.cH{grid-column:8;  }
.cJ{grid-column:10;  }
.cIJK{grid-column:9/12;  padding-left:22.500px;  }
.cL{grid-column:12;  }
.cM{grid-column:13;  }
.cN{grid-column:14;  }

.arrows{position:absolute;  left:0;  top:0;  }
.text-box{position:absolute;  left:1151px;  top:-2px;  width:56px;  overflow:hidden;  white-space:nowrap;  font-size:13.500px;  line-height:17.860px;  letter-spacing:0;  }
.cursor{position:absolute;  left:1020px;  top:314px;  }

.v-scroll{width:19px;  padding:12px 0 3px;  display:flex;  flex-direction:column;  align-items:center;  background:#f1f5f5;  }
.v-thumb{width:7px;  height:223px;  margin:4px 0 auto;  border-radius:4px;  background:#6b6b6b;  }

/* sheet tabs */
.sheet-bar{height:30px;  flex:none;  display:flex;  align-items:center;  background:#e0ebeb;  }
.sheet-bar>*{flex:none;  }
.nav{width:6px;  height:10px;  margin-left:22px;  }
.nav+.nav{margin-left:25px;  }
.sheet-tab{width:49px;  height:27px;  align-self:flex-start;  margin-left:47px;  text-align:center;  background:#fff;  border-radius:0 0 4px 4px;  font-size:12.500px;  font-weight:bold;  letter-spacing:-0.3px;  color:#222;  }
.sheet-tab span{display:inline-block;  line-height:17px;  margin-top:5px;  height:19px;  border-bottom:2px solid #1b7a48;  }
.plus{width:11px;  height:11px;  margin-left:43px;  }
.more{margin-left:528px;  }
.h-scroll{width:453px;  height:20px;  margin-left:14px;  padding:0 3px 0 5px;  display:flex;  align-items:center;  background:#f2f6f6;  border-radius:6px;  }
.h-thumb{width:288px;  height:8px;  margin:0 auto 0 31px;  border-radius:4px;  background:#6b6b6b;  }

/* status bar */
.status{height:23px;  flex:none;  display:flex;  align-items:center;  padding-left:11px;  background:#f4f5f5;  font-size:11px;  letter-spacing:-0.3px;  white-space:nowrap;  }
.status>*{flex:none;  }
.ready{width:45px;  color:#555;  }
.acc{margin:0 3px 0 15px;  }
.status b{width:130px;  font-size:11px;  letter-spacing:-0.55px;  color:#222;  }
.disp{margin:0 2px 0 609px;  }
.display{width:88px;  letter-spacing:-0.5px;  }
.view{width:38px;  height:23px;  display:flex;  align-items:center;  justify-content:center;  }
.on{background:#e0e2e2;  }
.zoom{margin-left:5px;  }
.pct{margin-left:11px;  color:#555;  }
```
